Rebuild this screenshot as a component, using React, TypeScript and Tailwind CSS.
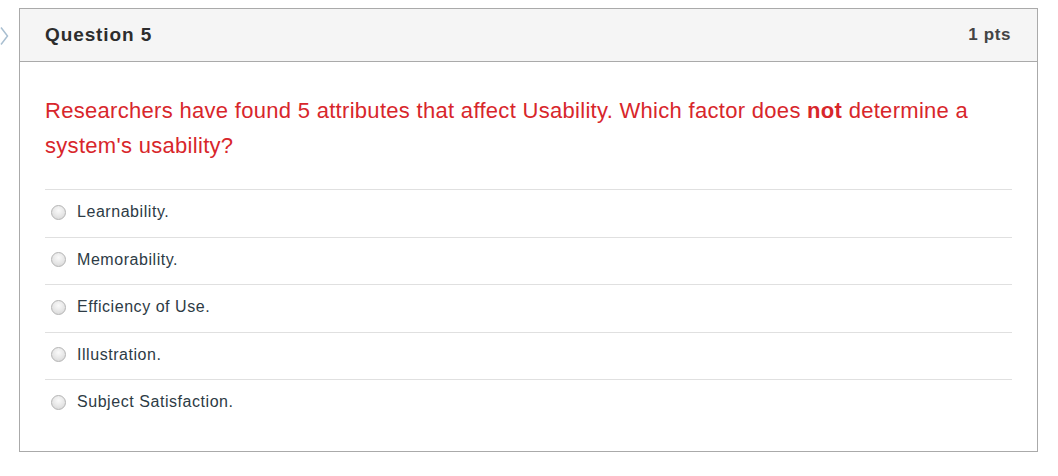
const options = [
  'Learnability.',
  'Memorability.',
  'Efficiency of Use.',
  'Illustration.',
  'Subject Satisfaction.',
];

function Radio() {
  return (
    <span className="inline-block w-[15px] h-[15px] rounded-full border border-[#b4b4b4] bg-[radial-gradient(circle_at_50%_35%,#fafafa_0%,#e6e6e6_55%,#d2d2d2_100%)] shrink-0" />
  );
}

export default function App() {
  return (
    <div className="w-[1058px] h-[476px] bg-white relative font-['Liberation_Sans',Arial,sans-serif]">
      <svg className="absolute left-0 top-[26px]" width="10" height="20" viewBox="0 0 10 20">
        <path d="M1 1.5 L7.5 10 L1 18.5" fill="none" stroke="#a9bfd1" strokeWidth="1.5" />
      </svg>
      <div className="absolute left-[19px] top-[8px] w-[1019px] h-[444px] border border-[#aaaaaa] flex flex-col">
        <div className="h-[53px] bg-[#f5f5f5] border-b border-[#aaaaaa] flex items-center justify-between pl-[25px] pr-[26px] shrink-0">
          <span className="text-[19px] font-bold text-[#2d2d2d] tracking-[0.9px] mt-[1px]">Question 5</span>
          <span className="text-[17px] font-bold text-[#444] tracking-[0.6px]">1 pts</span>
        </div>
        <div className="px-[25px] pt-[31px]">
          <p className="text-[22px] leading-[35px] text-[#d8262b] tracking-[0.3px] pr-[20px]">
            Researchers have found 5 attributes that affect Usability. Which factor does <b>not</b> determine a system's usability?
          </p>
          <div className="mt-[26px]">
            {options.map((o) => (
              <div key={o} className="border-t border-[#e0e0e0] h-[47.5px] flex items-center pl-[6px] gap-[11px] pb-[2px]">
                <Radio />
                <span className="text-[16px] text-[#2d3b45] tracking-[0.55px]">{o}</span>
              </div>
            ))}
          </div>
        </div>
      </div>
    </div>
  );
}
